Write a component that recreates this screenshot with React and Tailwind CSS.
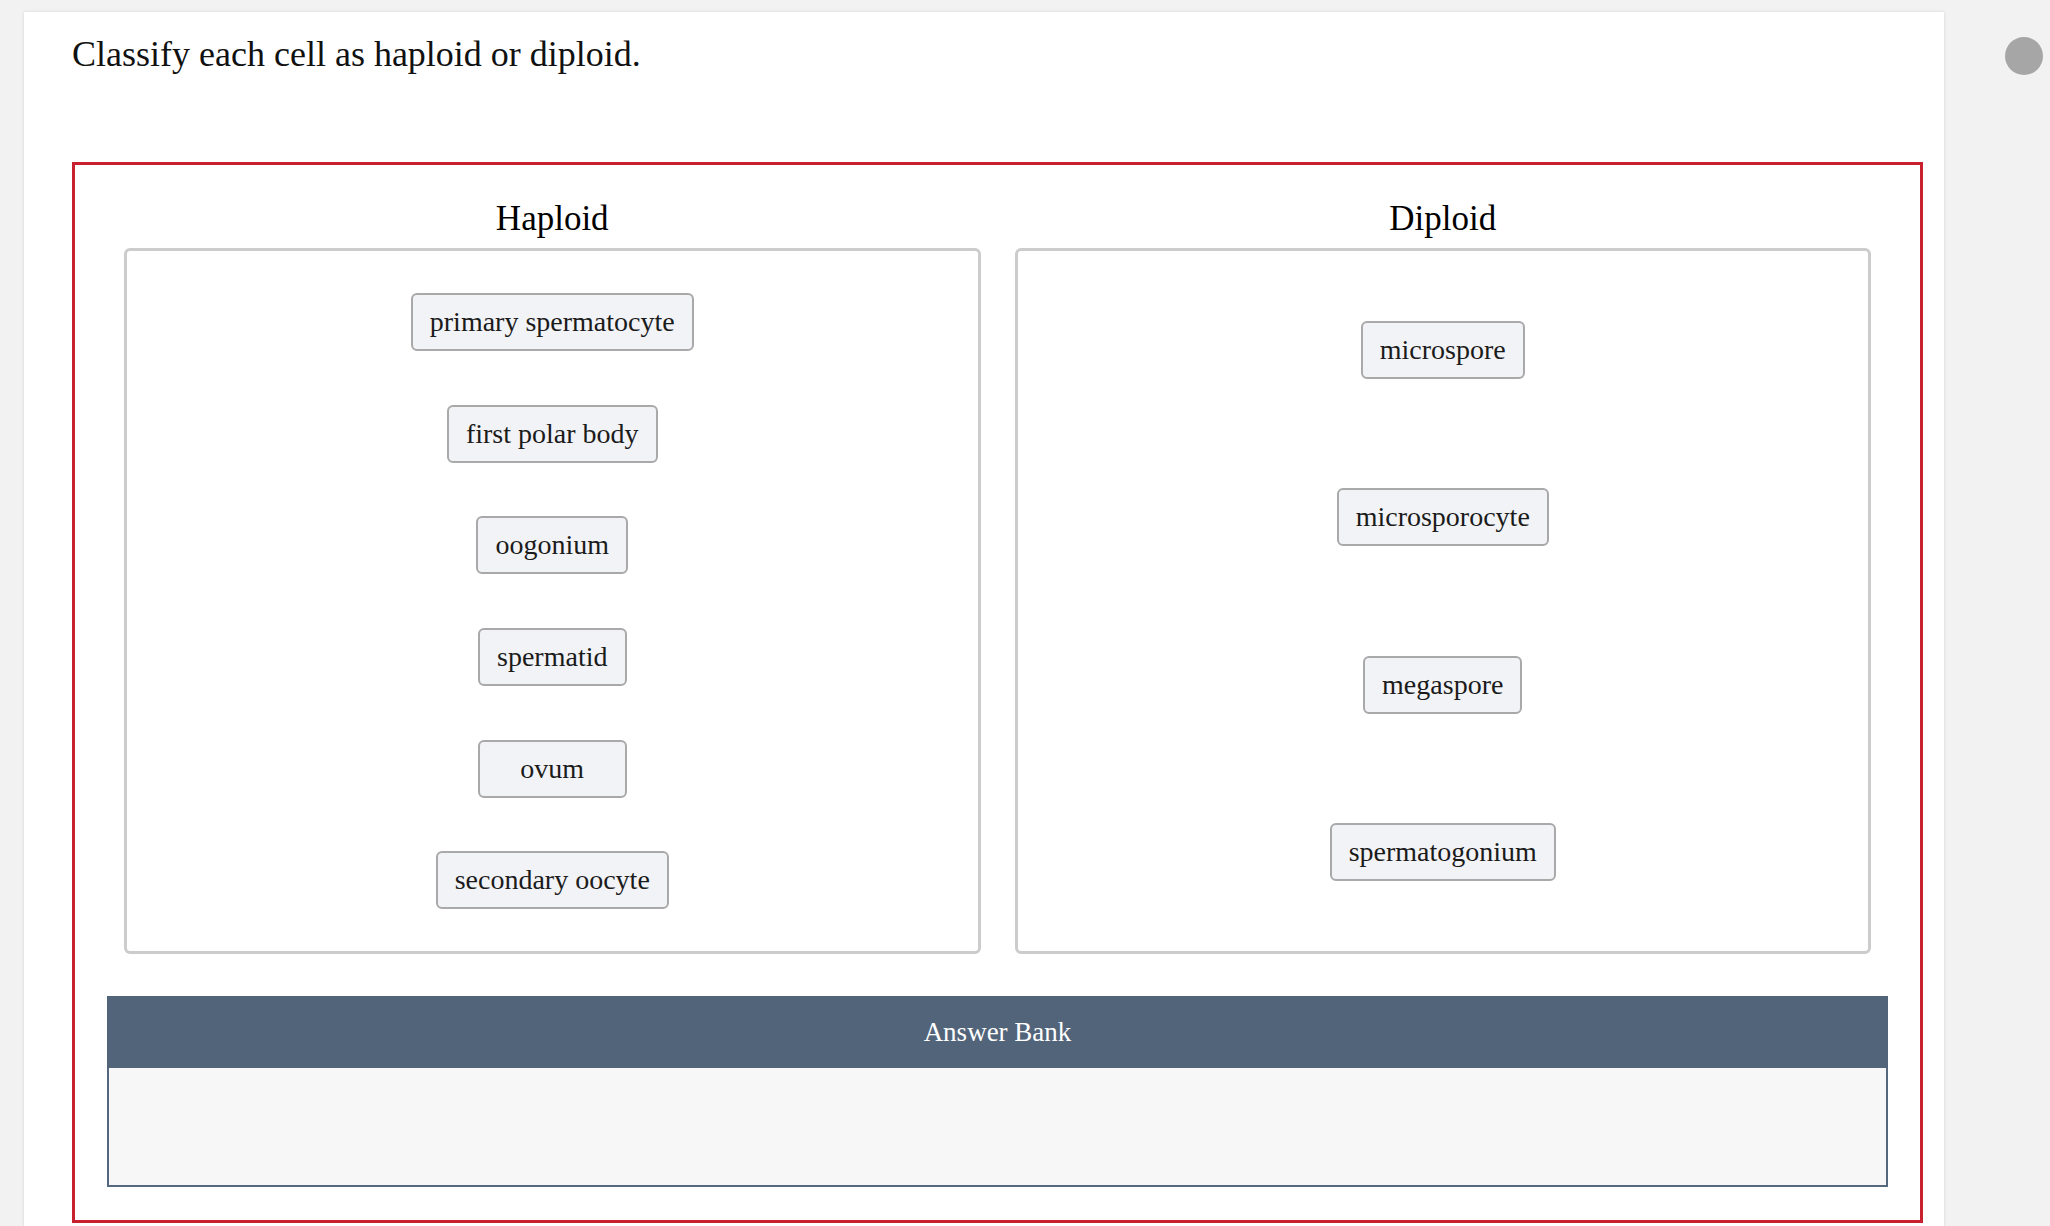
// Classify cells as haploid or diploid — drag-and-drop question
const haploid = ['primary spermatocyte', 'first polar body', 'oogonium', 'spermatid', 'ovum', 'secondary oocyte']
const diploid = ['microspore', 'microsporocyte', 'megaspore', 'spermatogonium']

function Chip({ label }) {
  return (
    <div className="min-w-[149px] text-center border-2 border-[#a9a9a9] rounded-[6px] bg-[#f2f3f6] px-[17px] py-[11px] text-[28px] leading-[32px] text-[#1b1b1b] whitespace-nowrap">
      {label}
    </div>
  )
}

function Bin({ title, items }) {
  return (
    <div className="flex-1 flex flex-col">
      <h2 className="text-center text-[35px] leading-[40px] text-black">{title}</h2>
      <div className="mt-[9px] h-[706px] border-[3px] border-[#cccccc] rounded-[6px] py-[15px] flex flex-col">
        {items.map((item) => (
          <div key={item} className="flex-1 flex items-center justify-center">
            <Chip label={item} />
          </div>
        ))}
      </div>
    </div>
  )
}

export default function App() {
  return (
    <div className="h-[1226px] overflow-hidden bg-[#f2f2f2] flex" style={{ fontFamily: '"Liberation Serif", "Times New Roman", serif' }}>
      <div className="ml-[24px] mt-[12px] w-[1920px] min-h-[1300px] bg-white shadow-[0_0_3px_rgba(0,0,0,0.12)] pl-[48px] pt-[22px]">
        <p className="text-[36px] leading-[40px] text-[#111]">Classify each cell as haploid or diploid.</p>

        <div className="mt-[88px] w-[1851px] border-[3px] border-[#c8202f] pt-[34px] pb-[33px]">
          <div className="flex gap-[34px] px-[49px]">
            <Bin title="Haploid" items={haploid} />
            <Bin title="Diploid" items={diploid} />
          </div>

          <div className="mt-[42px] mx-[32px]">
            <div className="h-[72px] bg-[#52647a] flex items-center justify-center text-white text-[27px]">
              Answer Bank
            </div>
            <div className="h-[119px] bg-[#f7f7f8] border-2 border-t-0 border-[#56687e]"></div>
          </div>
        </div>
      </div>

      <div className="ml-[61px] mt-[37px] w-[38px] h-[38px] rounded-full bg-[#a6a6a6] shrink-0"></div>
    </div>
  )
}
